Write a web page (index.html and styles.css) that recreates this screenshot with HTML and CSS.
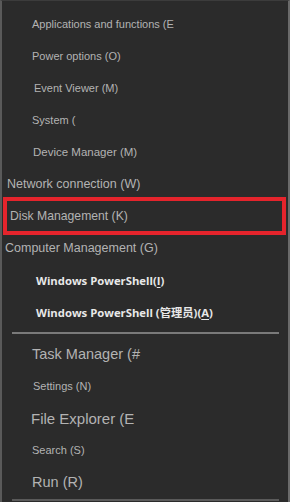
FILE: index.html
```html
<!DOCTYPE html>
<html lang="zh-CN">
<head>
  <meta charset="UTF-8">
  <meta name="viewport" content="width=device-width, initial-scale=1.0">
  <title>Win+X 菜单</title>
  <link rel="stylesheet" href="styles.css">
</head>
<body>
<div class="menu">
  <div class="item indent">Applications and functions (E</div>
  <div class="item indent">Power options (O)</div>
  <div class="item indent event">Event Viewer (M)</div>
  <div class="item indent">System (</div>
  <div class="item indent device">Device Manager (M)</div>
  <div class="item big network">Network connection (W)</div>
  <div class="item big disk">Disk Management (K)</div>
  <div class="item big computer">Computer Management (G)</div>
  <div class="item shell">Windows PowerShell(<u>I</u>)</div>
  <div class="item shell">Windows PowerShell (管理员)(<u>A</u>)</div>

  <div class="separator"></div>

  <div class="item indent large">Task Manager (#</div>
  <div class="item indent settings">Settings (N)</div>
  <div class="item indent huge">File Explorer (E</div>
  <div class="item indent">Search (S)</div>
  <div class="item indent large">Run (R)</div>

  <div class="separator bottom"></div>
</div>
</body>
</html>
```

FILE: styles.css
```css
body {
  margin: 0;
  padding: 0;
  background-color: #2b2b2b;
  font-family: "Liberation Sans", Arial, sans-serif;
  color: #b3b3b3;
}
.menu {
  width: 290px;
  height: 502px;
  box-sizing: border-box;
  padding-top: 7px;
  border-top: 1px solid #3c3c3c;
  border-left: 2px solid #5a5a5a;
  border-right: 2px solid #6a6a6a;
  display: flex;
  flex-direction: column;
  overflow: hidden;
}
.item {
  height: 32px;
  flex-shrink: 0;
  display: flex;
  align-items: center;
  font-size: 11px;
  white-space: nowrap;
}
.indent {
  padding-left: 30px;
}
.event {
  padding-left: 32px;
}
.device {
  padding-left: 31px;
  font-size: 11.5px;
}
.big {
  font-size: 12.5px;
}
.network {
  padding-left: 5px;
}
.disk {
  margin: 0 5px 0 4px;
  padding-left: 4px;
  font-size: 12.2px;
  outline: 4px solid #e5242c;
  outline-offset: -1px;
}
.computer {
  padding-left: 3px;
}
.shell {
  padding-left: 34px;
  font-family: "Open Sans", "Noto Sans CJK SC", sans-serif;
  font-weight: 700;
  font-size: 11.3px;
  color: #e8e8e8;
}
.shell u {
  text-underline-offset: 2px;
}
.separator {
  height: 2px;
  margin: 4px 9px 4px 10px;
  background-color: #7a7a7a;
  flex-shrink: 0;
}
.separator.bottom {
  margin-top: 1px;
  background-color: #5a5a5a;
}
.large {
  font-size: 14.5px;
}
.huge {
  font-size: 15px;
  padding-left: 29px;
}
.settings {
  padding-left: 31px;
}
```
